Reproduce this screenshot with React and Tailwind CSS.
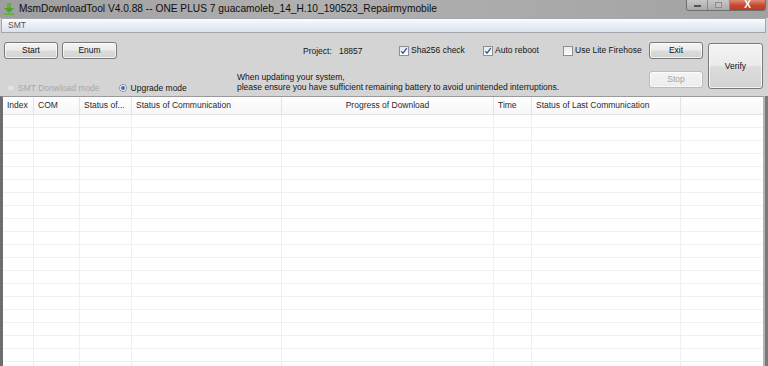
import React from "react";

const cols = [
  { w: 31, label: "Index", align: "left" },
  { w: 46, label: "COM", align: "left" },
  { w: 52, label: "Status of...", align: "left" },
  { w: 150, label: "Status of Communication", align: "left" },
  { w: 212, label: "Progress of Download", align: "center" },
  { w: 38, label: "Time", align: "left" },
  { w: 149, label: "Status of Last Communication", align: "left" },
];

function WinButton({ children, className = "", disabled = false }) {
  return (
    <div
      className={`flex items-center justify-center rounded-[3px] border ${
        disabled
          ? "border-[#bcbcbc] bg-[linear-gradient(#f4f4f4,#ececec)] text-[#a3a3a3]"
          : "border-[#7a7a7a] bg-[linear-gradient(#f4f4f4_0%,#ebebeb_48%,#dcdcdc_52%,#d2d2d2_100%)] text-[#111]"
      } shadow-[inset_0_0_0_1px_rgba(255,255,255,0.7)] ${className}`}
    >
      {children}
    </div>
  );
}

function Check({ checked, label, w }) {
  return (
    <div className="flex items-center" style={{ width: w }}>
      <div className="relative flex h-[10px] w-[10px] items-center justify-center border border-[#8e8f8f] bg-[linear-gradient(#e8e8e8,#ffffff)]">
        {checked && (
          <svg width="8" height="8" viewBox="0 0 8 8" className="absolute">
            <path d="M1.2 4.2 L3 6.2 L6.8 1.2" fill="none" stroke="#3a57a8" strokeWidth="1.4" />
          </svg>
        )}
      </div>
      <span className="ml-[2px]">{label}</span>
    </div>
  );
}

export default function App() {
  const rows = Array.from({ length: 20 });
  return (
    <div
      className="relative flex h-[366px] w-[768px] flex-col overflow-hidden bg-[#d4d4d4] text-[8.5px] text-[#151515]"
      style={{ fontFamily: '"Liberation Sans", Arial, sans-serif' }}
    >
      {/* Title bar */}
      <div className="relative flex h-[18px] shrink-0 items-center bg-[linear-gradient(90deg,#9e9e9e_0%,#b0b0b0_40%,#aaaaaa_70%,#a2a2a2_100%)]">
        <svg width="12" height="12" viewBox="0 0 12 12" className="ml-[3px]">
          <rect x="4" y="0" width="4" height="5" fill="#5fb03a" />
          <path d="M1 5 H11 L6 10 Z" fill="#4fa22c" />
          <rect x="1" y="10.5" width="10" height="1.5" fill="#5fb03a" />
        </svg>
        <span className="ml-[4px] text-[10.2px] leading-none text-[#0d0d0d]">
          MsmDownloadTool V4.0.88 -- ONE PLUS 7 guacamoleb_14_H.10_190523_Repairmymobile
        </span>
        {/* window controls */}
        <div className="absolute left-[686px] top-0 flex h-[11px] overflow-hidden rounded-b-[3px] border border-t-0 border-[#6f6f6f]">
          <div className="flex w-[21px] items-center justify-center border-r border-[#8a8a8a] bg-[linear-gradient(#c8c8c8,#a9a9a9)]">
            <div className="mt-[2px] h-[2px] w-[7px] border border-[#555] bg-white" />
          </div>
          <div className="flex w-[22px] items-center justify-center border-r border-[#8a8a8a] bg-[linear-gradient(#c8c8c8,#a9a9a9)]">
            <div className="h-[6px] w-[7px] border border-[#8c8c8c] bg-[#bdbdbd]" />
          </div>
          <div className="flex w-[35px] items-center justify-center bg-[linear-gradient(#e08a76,#c7472e_55%,#b83c25)]">
            <span className="text-[10px] font-bold leading-none text-white">X</span>
          </div>
        </div>
      </div>

      {/* Tab strip */}
      <div className="mx-[1px] h-[15px] w-[765px] shrink-0 border border-[#a3a7ad] bg-[linear-gradient(#fbfcfe_0%,#eef2f8_30%,#dbe2ee_100%)]">
        <span className="ml-[6px] text-[#555] leading-[13px]">SMT</span>
      </div>

      {/* Controls */}
      <div className="flex h-[63px] shrink-0">
        <div className="flex w-[708px] flex-col">
          <div className="mt-[9px] flex h-[17px] items-center">
            <WinButton className="ml-[4px] h-[17px] w-[54px]">Start</WinButton>
            <WinButton className="ml-[4px] h-[17px] w-[55px]">Enum</WinButton>
            <span className="ml-[186px] w-[96px] mt-[2px]">Project:&nbsp;&nbsp; 18857</span>
            <Check checked label="Sha256 check" w={84} />
            <Check checked label="Auto reboot" w={80} />
            <Check label="Use Lite Firehose" w={86} />
            <WinButton className="h-[17px] w-[54px]">Exit</WinButton>
          </div>
          <div className="mt-[12px] flex">
            <div className="flex w-[237px] items-center pt-[11px]">
              <div className="ml-[7px] h-[8px] w-[8px] rounded-full border border-[#cfcfcf] bg-[#e2e2e2]" />
              <span className="ml-[3px] text-[#a8a8a8]">SMT Donwload mode</span>
              <div className="ml-[19px] flex h-[8px] w-[8px] items-center justify-center rounded-full border border-[#8e8f8f] bg-white">
                <div className="h-[4px] w-[4px] rounded-full bg-[#2c6fc6]" />
              </div>
              <span className="ml-[4px]">Upgrade mode</span>
            </div>
            <div className="w-[412px] pt-[1px] leading-[10px]">
              <div>When updating your system,</div>
              <div>please ensure you have sufficient remaining battery to avoid unintended interruptions.</div>
            </div>
            <WinButton disabled className="h-[17px] w-[54px]">Stop</WinButton>
          </div>
        </div>
        <WinButton className="mt-[10px] h-[46px] w-[55px]">Verify</WinButton>
      </div>

      {/* Table */}
      <div className="flex min-h-0 flex-1">
        <div className="flex w-[763px] flex-col overflow-hidden border-l-[3px] border-t border-[#6d6d6d] border-t-[#9a9a9a] bg-white">
          <div className="flex h-[18px] shrink-0 border-b border-[#e3e3e3] bg-[linear-gradient(#ffffff,#f6f7f9)]">
            {cols.map((c, i) => (
              <div
                key={i}
                className={`flex h-full items-center border-r border-[#e3e3e3] px-[4px] text-[#2a2a2a] ${
                  c.align === "center" ? "justify-center" : ""
                }`}
                style={{ width: c.w }}
              >
                {c.label}
              </div>
            ))}
            <div className="flex-1" />
          </div>
          {rows.map((_, r) => (
            <div key={r} className="flex h-[13px] shrink-0 border-b border-[#f0f0f0]">
              {cols.map((c, i) => (
                <div key={i} className="h-full border-r border-[#f0f0f0]" style={{ width: c.w }} />
              ))}
              <div className="flex-1" />
            </div>
          ))}
        </div>
        <div className="w-[2px] bg-[#b4b4b4]" />
        <div className="w-[3px] bg-[#7a7a7a]" />
      </div>
    </div>
  );
}
